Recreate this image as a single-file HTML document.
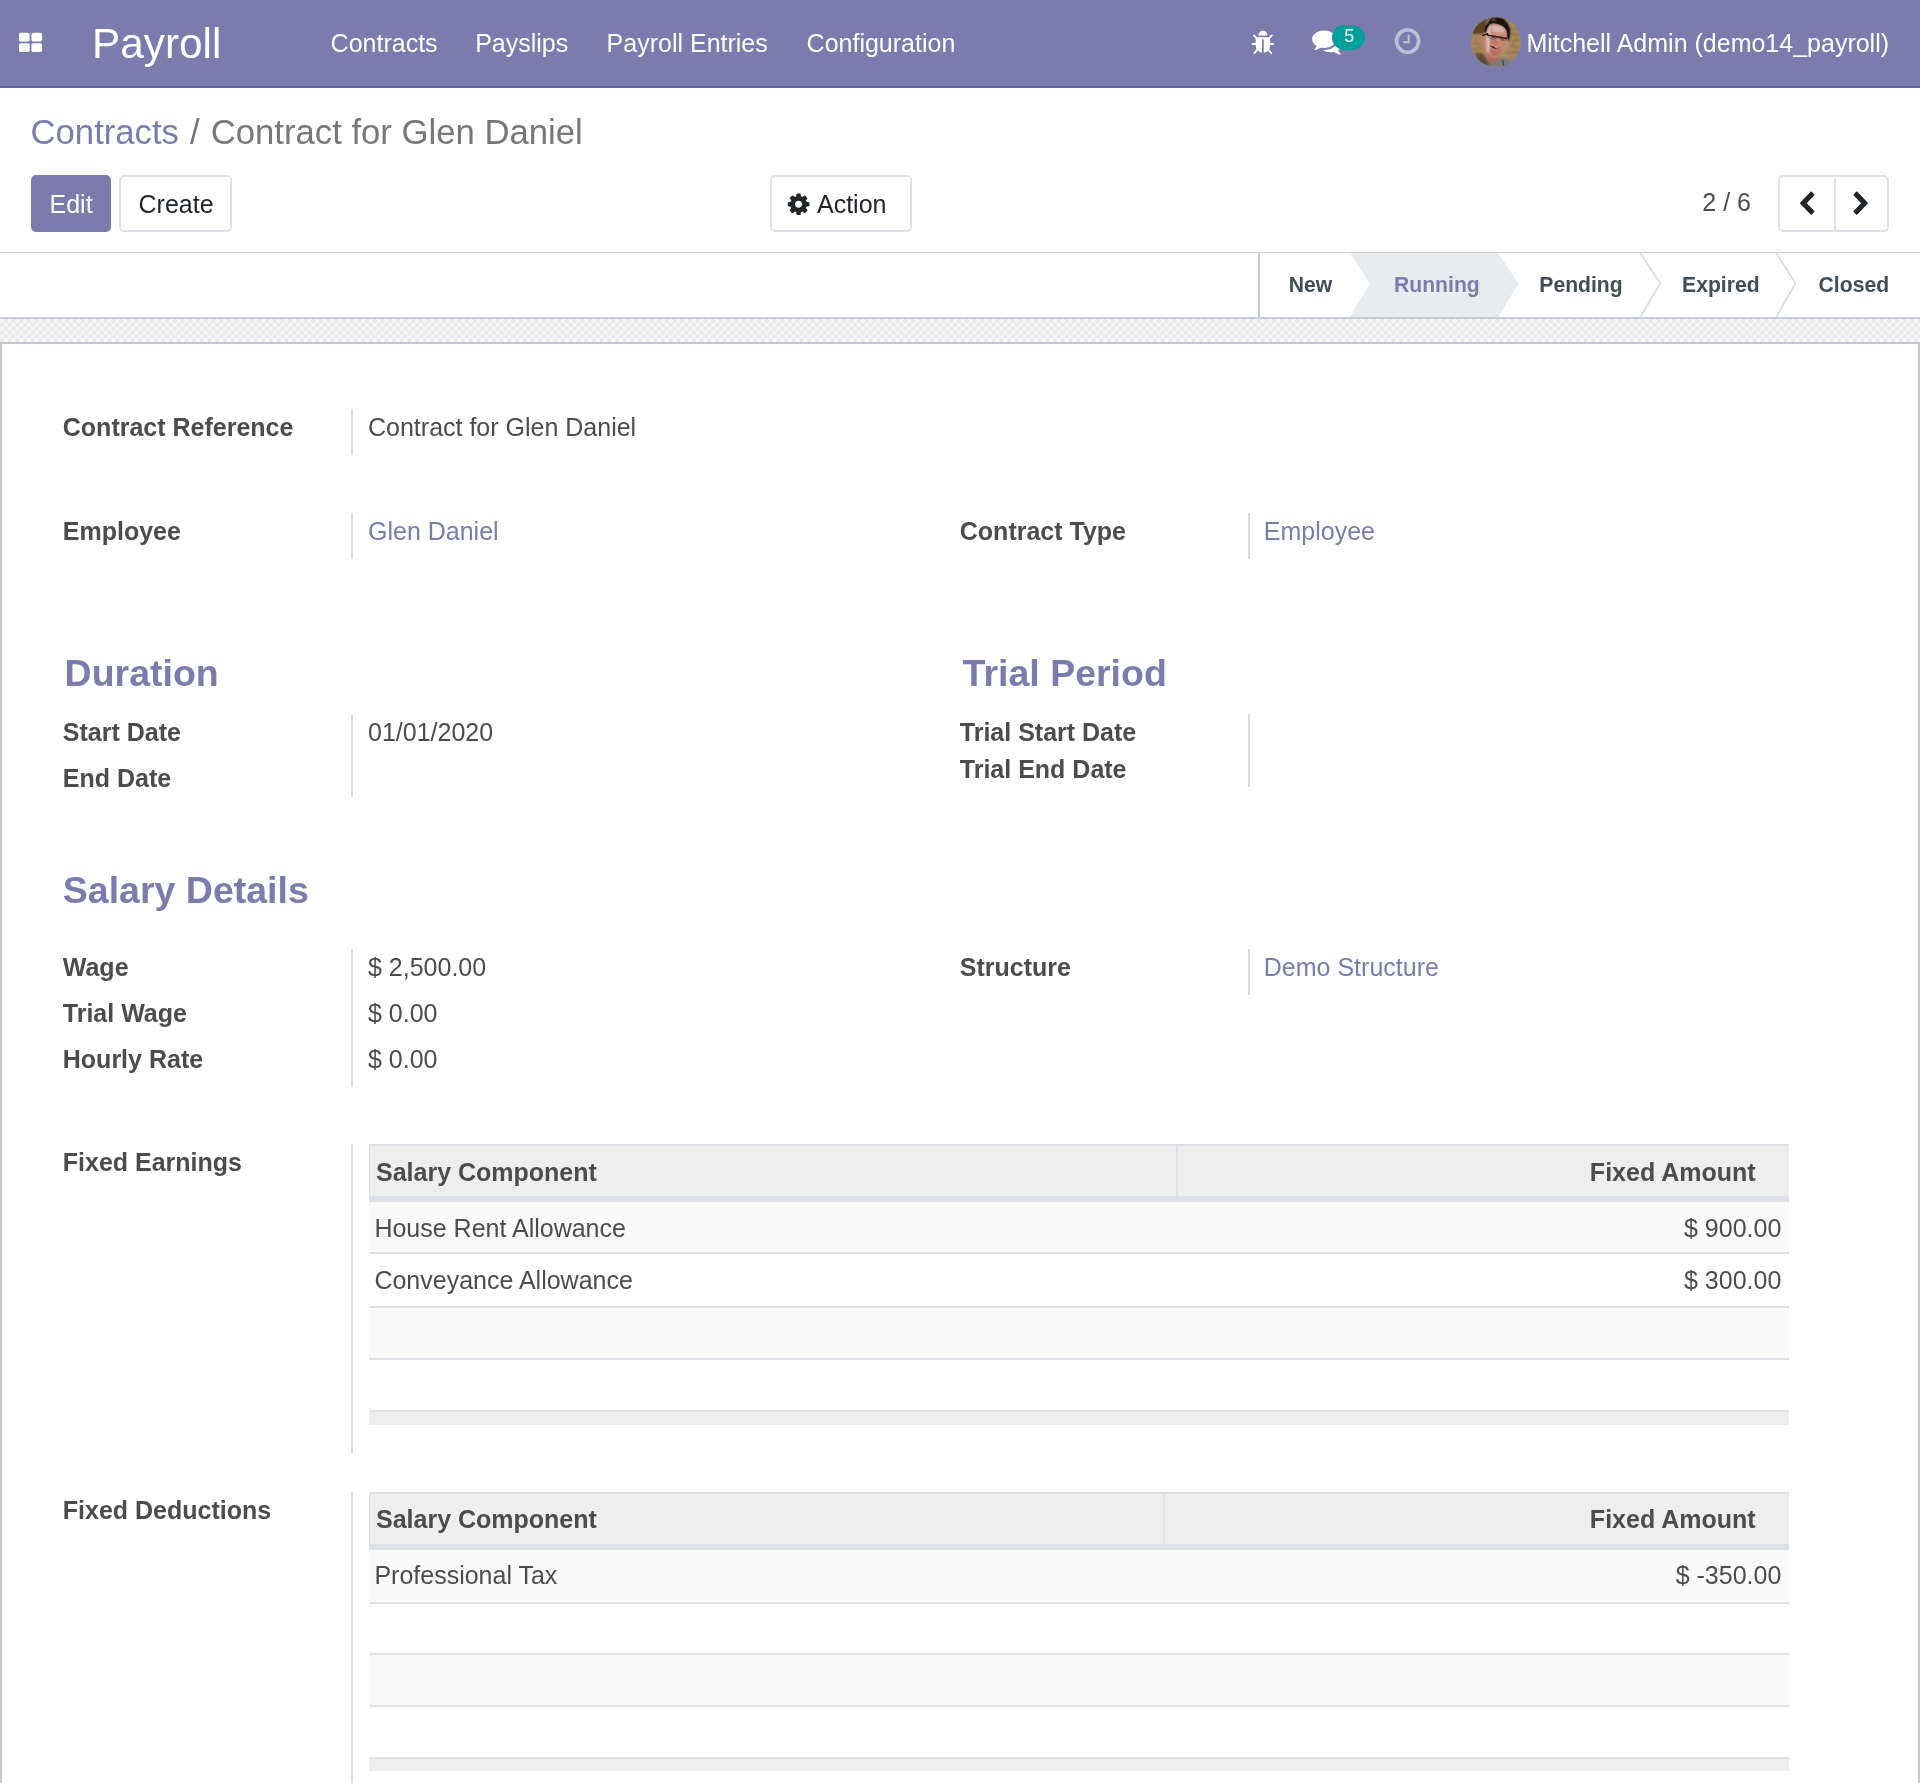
<!DOCTYPE html>
<html lang="en">
<head>
<meta charset="utf-8">
<title>Contract for Glen Daniel - Odoo</title>
<style>
*{box-sizing:border-box;margin:0;padding:0}
html,body{width:1920px;height:1783px;overflow:hidden;background:#fff}
body{font-family:"Liberation Sans",Arial,sans-serif;font-size:25px;color:#4c4c4c;position:relative}
.t{position:absolute;white-space:nowrap;line-height:0;display:block;height:0}
#root{position:absolute;left:0;top:0;width:1920px;height:1783px;overflow:hidden;will-change:transform}
.box{position:absolute}
#nav{left:0;top:0;width:1920px;height:88px;background:#7c7bad;border-bottom:2px solid #5f5e97}
#cp{left:0;top:88px;width:1920px;height:165px;background:#fff;border-bottom:1.6px solid #cfcfcf}
.btn{position:absolute;top:175px;height:57px;border-radius:5px;border:2px solid #dee2e6;background:#fff}
.btn.pri{background:#7c7bad;border-color:#7c7bad}
#sb{left:0;top:253px;width:1920px;height:66px;background:#fff;border-bottom:2px solid #c8ccd5}
#bg{left:0;top:319px;width:1920px;height:1464px;background-color:#f6f6f6;
background-image:linear-gradient(45deg,#e7e7e7 25%,transparent 25%,transparent 75%,#e7e7e7 75%),linear-gradient(45deg,#e7e7e7 25%,transparent 25%,transparent 75%,#e7e7e7 75%);background-size:7.7px 7.7px;background-position:0 0,3.85px 3.85px}
#sheet{left:0;top:342.4px;width:1920px;height:1445px;background:#fff;border:2px solid #c6c5d4}
.sep{position:absolute;width:1.75px;background:#dcdcdc}
.tbl{position:absolute;left:369px;width:1420px}
.tbl div{position:absolute;left:0;width:1420px}
</style>
</head>
<body>
<div id="root">

<div id="nav" class="box"></div>
<span class="t" style="left:92px;top:43.50px;font-size:42.3px;font-weight:400;color:#fff;">Payroll</span>
<span class="t" style="left:330.6px;top:43.00px;font-size:25px;font-weight:400;color:#fff;">Contracts</span>
<span class="t" style="left:475.2px;top:43.00px;font-size:25px;font-weight:400;color:#fff;">Payslips</span>
<span class="t" style="left:606.6px;top:43.00px;font-size:25px;font-weight:400;color:#fff;">Payroll Entries</span>
<span class="t" style="left:806.6px;top:43.00px;font-size:25px;font-weight:400;color:#fff;">Configuration</span>
<span class="t" style="left:1526.4px;top:43.00px;font-size:25px;font-weight:400;color:#fff;">Mitchell Admin (demo14_payroll)</span>
<svg class="box" style="left:0;top:0" width="1920" height="88" viewBox="0 0 1920 88"><path transform="translate(19.000 52.000) scale(0.01388 -0.01367)" fill="#fff" d="M768 512v-384q0 -52 -38 -90t-90 -38h-512q-52 0 -90 38t-38 90v384q0 52 38 90t90 38h512q52 0 90 -38t38 -90zM768 1280v-384q0 -52 -38 -90t-90 -38h-512q-52 0 -90 38t-38 90v384q0 52 38 90t90 38h512q52 0 90 -38t38 -90zM1664 512v-384q0 -52 -38 -90t-90 -38 h-512q-52 0 -90 38t-38 90v384q0 52 38 90t90 38h512q52 0 90 -38t38 -90zM1664 1280v-384q0 -52 -38 -90t-90 -38h-512q-52 0 -90 38t-38 90v384q0 52 38 90t90 38h512q52 0 90 -38t38 -90z"/><path transform="translate(1251.253 52.573) scale(0.01397 -0.01486)" fill="#fff" d="M1632 576q0 -26 -19 -45t-45 -19h-224q0 -171 -67 -290l208 -209q19 -19 19 -45t-19 -45q-18 -19 -45 -19t-45 19l-198 197q-5 -5 -15 -13t-42 -28.5t-65 -36.5t-82 -29t-97 -13v896h-128v-896q-51 0 -101.5 13.5t-87 33t-66 39t-43.5 32.5l-15 14l-183 -207 q-20 -21 -48 -21q-24 0 -43 16q-19 18 -20.5 44.5t15.5 46.5l202 227q-58 114 -58 274h-224q-26 0 -45 19t-19 45t19 45t45 19h224v294l-173 173q-19 19 -19 45t19 45t45 19t45 -19l173 -173h844l173 173q19 19 45 19t45 -19t19 -45t-19 -45l-173 -173v-294h224q26 0 45 -19 t19 -45zM1152 1152h-640q0 133 93.5 226.5t226.5 93.5t226.5 -93.5t93.5 -226.5z"/><path transform="translate(1312.100 52.226) scale(0.01712 -0.01697)" fill="#fff" d="M1408 768q0 -139 -94 -257t-256.5 -186.5t-353.5 -68.5q-86 0 -176 16q-124 -88 -278 -128q-36 -9 -86 -16h-3q-11 0 -20.5 8t-11.5 21q-1 3 -1 6.5t0.5 6.5t2 6l2.5 5t3.5 5.5t4 5t4.5 5t4 4.5q5 6 23 25t26 29.5t22.5 29t25 38.5t20.5 44q-124 72 -195 177t-71 224 q0 139 94 257t256.5 186.5t353.5 68.5t353.5 -68.5t256.5 -186.5t94 -257zM1792 512q0 -120 -71 -224.5t-195 -176.5q10 -24 20.5 -44t25 -38.5t22.5 -29t26 -29.5t23 -25q1 -1 4 -4.5t4.5 -5t4 -5t3.5 -5.5l2.5 -5t2 -6t0.5 -6.5t-1 -6.5q-3 -14 -13 -22t-22 -7 q-50 7 -86 16q-154 40 -278 128q-90 -16 -176 -16q-271 0 -472 132q58 -4 88 -4q161 0 309 45t264 129q125 92 192 212t67 254q0 77 -23 152q129 -71 204 -178t75 -230z"/><path transform="translate(1394.700 52.017) scale(0.01680 -0.01706)" fill="#bebdd6" d="M896 992v-448q0 -14 -9 -23t-23 -9h-320q-14 0 -23 9t-9 23v64q0 14 9 23t23 9h224v352q0 14 9 23t23 9h64q14 0 23 -9t9 -23zM1312 640q0 148 -73 273t-198 198t-273 73t-273 -73t-198 -198t-73 -273t73 -273t198 -198t273 -73t273 73t198 198t73 273zM1536 640 q0 -209 -103 -385.5t-279.5 -279.5t-385.5 -103t-385.5 103t-279.5 279.5t-103 385.5t103 385.5t279.5 279.5t385.5 103t385.5 -103t279.5 -279.5t103 -385.5z"/></svg><div class="box" style="left:1332px;top:24.8px;width:33.2px;height:25.3px;border-radius:12.7px;background:#00a09d"></div><svg class="box" style="left:1471px;top:17px" width="50" height="50" viewBox="0 0 50 50"><defs><clipPath id="avc"><circle cx="25" cy="25" r="25"/></clipPath><filter id="avb" x="-20%" y="-20%" width="140%" height="140%"><feGaussianBlur stdDeviation="0.9"/></filter><filter id="avb2" x="-20%" y="-20%" width="140%" height="140%"><feGaussianBlur stdDeviation="0.35"/></filter></defs><g clip-path="url(#avc)"><rect width="50" height="50" fill="#a98b5e"/><g filter="url(#avb)"><path d="M0 0H17L14 9.600L12.500 17H0Z" fill="#5e3f20"/><path d="M17 0H34L30 3L20 3Z" fill="#7a5a32"/><g stroke="#896b43" stroke-width="1.100" fill="none"><path d="M0 20.500H11M0 26.500H10M0 32H12M0 37.500H10M38 11.500H50M39.500 17.500H50M39 23.500H50M37 29.500H50M35 35.500H50M41 41.500H50"/><path d="M5 20.500V26.500M8 26.500V32M4 32V37.500M43 11.500V17.500M46 17.500V23.500M42 23.500V29.500M45 29.500V35.500M40 35.500V41.500" stroke-width="0.800"/></g><path d="M4.700 35.700L11 36.100L14.500 40L19 48L12 50H6Z" fill="#5f4b3c"/><path d="M15 37L29 40L27.500 46L19 47Z" fill="#ab6b5c"/><path d="M18 46L27 44.500L30 40.500L36 41.500L42 43.500L38 50H19Z" fill="#747c7d"/><path d="M12.900 15L14.100 9.600L17.200 5.300L20 1.200L26.200 0.300L32.500 1.800L36.900 6.800L39.500 12.700L39.100 18.200L37.900 24L36.500 24.400L35.900 18.200L35.200 13.500L32 9.600L27.300 7.600L22.300 6.400L18.750 8L16.400 11.900L14.800 16.600Z" fill="#1d1511"/><path d="M16.400 11.900L18.750 8L22.300 6.400L27.300 7.600L32 9.600L35.200 13.500L35.900 18.200L36.500 24.400L35.500 28.300L33.200 33.800L30.100 38.100L26.600 40.400L22.700 40.800L18.750 39.300L15.600 36.100L13.300 30.300L12.500 24.400L12.900 18.600Z" fill="#c68a78"/><path d="M20 8L27 8L33 11L35 16L22 15Z" fill="#dcb3a8"/><path d="M17.600 9.500L19.600 8.800L18.400 22L18 35L16.200 34L16 22Z" fill="#e2ccd0"/><path d="M19 23L26 24L27.500 28L20 27.500Z" fill="#b87462"/><path d="M29 25L35 25.500L34 30L30 29Z" fill="#c07f6c"/><path d="M9.400 20.100L12.500 19.500L13 27.500L10.500 27Z" fill="#c07a66"/><path d="M36.300 25.500L38.200 26L37 30.500L35.500 30Z" fill="#cf937f"/><path d="M18 31L31 32L29 38.500L21 39Z" fill="#b5705e"/></g><g filter="url(#avb2)"><path d="M13.400 14.500L14.600 9.800L17.500 5.800L20.300 1.800L26.200 0.900L32.200 2.400L36.400 7.200L38.800 12.800L38.500 18L37.600 22.500L36.700 22L36.300 17L35.600 13L32.300 9L27.400 6.900L22.200 5.700L18.400 7.400L16 11.500L14.600 15.500Z" fill="#1d1511"/><path d="M11.300 18.600L16.400 16.800L16.800 18.200L27 20L35.900 21.500" stroke="#1f1816" stroke-width="1.500" fill="none"/><path d="M17 18.600C18 22.500 24 23.500 26.500 20.300M28.200 20.600C29 23.800 33.500 24.600 35.600 22" stroke="#6a4a40" stroke-width="0.700" fill="none"/><path d="M20.500 20.400L24.500 21M30 21.800L33.500 22.300" stroke="#4a3430" stroke-width="0.800"/><path d="M18.400 28.300C21 31.500 26 33 29.500 30.600C27 30.700 22 30 18.400 28.300Z" fill="#3a1e1a"/><path d="M23 29.900C25 31.500 27.500 31.700 28.800 30.700C26.500 30.800 24.800 30.500 23 29.900Z" fill="#f4e8e2"/><path d="M31.400 42.800L32.800 48.600" stroke="#3f4443" stroke-width="1.300"/><path d="M21 3.200L24 2.600L25 3.600" stroke="#8a8f96" stroke-width="0.700" fill="none"/></g></g></svg>
<span class="t" style="left:1344.3px;top:36.00px;font-size:17.9px;font-weight:400;color:#fff;">5</span>
<div id="cp" class="box"></div>
<span class="t" style="left:30.5px;top:132.00px;font-size:34.7px;font-weight:400;color:#7c7bad;">Contracts</span>
<span class="t" style="left:190px;top:132.00px;font-size:34.7px;font-weight:400;color:#6c757d;">/</span>
<span class="t" style="left:210.7px;top:132.00px;font-size:34.7px;font-weight:400;color:#777777;">Contract for Glen Daniel</span>
<div class="btn pri" style="left:31px;width:80px"></div>
<span class="t" style="left:49.5px;top:204.00px;font-size:25px;font-weight:400;color:#fff;">Edit</span>
<div class="btn" style="left:119.4px;width:112.6px"></div>
<span class="t" style="left:138.5px;top:204.00px;font-size:25px;font-weight:400;color:#212529;">Create</span>
<div class="btn" style="left:770.3px;width:141.6px"></div>
<svg class="box" style="left:780px;top:185px" width="40" height="40" viewBox="780 185 40 40"><path transform="translate(787.750 213.208) scale(0.01410 -0.01400)" fill="#212529" d="M1024 640q0 106 -75 181t-181 75t-181 -75t-75 -181t75 -181t181 -75t181 75t75 181zM1536 749v-222q0 -12 -8 -23t-20 -13l-185 -28q-19 -54 -39 -91q35 -50 107 -138q10 -12 10 -25t-9 -23q-27 -37 -99 -108t-94 -71q-12 0 -26 9l-138 108q-44 -23 -91 -38 q-16 -136 -29 -186q-7 -28 -36 -28h-222q-14 0 -24.5 8.5t-11.5 21.5l-28 184q-49 16 -90 37l-141 -107q-10 -9 -25 -9q-14 0 -25 11q-126 114 -165 168q-7 10 -7 23q0 12 8 23q15 21 51 66.5t54 70.5q-27 50 -41 99l-183 27q-13 2 -21 12.5t-8 23.5v222q0 12 8 23t19 13 l186 28q14 46 39 92q-40 57 -107 138q-10 12 -10 24q0 10 9 23q26 36 98.5 107.5t94.5 71.5q13 0 26 -10l138 -107q44 23 91 38q16 136 29 186q7 28 36 28h222q14 0 24.5 -8.5t11.5 -21.5l28 -184q49 -16 90 -37l142 107q9 9 24 9q13 0 25 -10q129 -119 165 -170q7 -8 7 -22 q0 -12 -8 -23q-15 -21 -51 -66.5t-54 -70.5q26 -50 41 -98l183 -28q13 -2 21 -12.5t8 -23.5z"/></svg>
<span class="t" style="left:817px;top:204.00px;font-size:25px;font-weight:400;color:#212529;">Action</span>
<span class="t" style="left:1702.3px;top:202.00px;font-size:25px;font-weight:400;color:#4c4c4c;">2 / 6</span>
<div class="btn" style="left:1778px;width:110.5px"></div>
<div class="box" style="left:1834px;top:175px;width:2px;height:57px;background:#dee2e6"></div>
<svg class="box" style="left:1790px;top:185px" width="90" height="36" viewBox="1790 185 90 36"><path transform="translate(1797.859 213.285) scale(0.01390 -0.01436)" fill="#212529" d="M1171 1235l-531 -531l531 -531q19 -19 19 -45t-19 -45l-166 -166q-19 -19 -45 -19t-45 19l-742 742q-19 19 -19 45t19 45l742 742q19 19 45 19t45 -19l166 -166q19 -19 19 -45t-19 -45z"/><path transform="translate(1852.249 213.285) scale(0.01390 -0.01436)" fill="#212529" d="M1107 659l-742 -742q-19 -19 -45 -19t-45 19l-166 166q-19 19 -19 45t19 45l531 531l-531 531q-19 19 -19 45t19 45l166 166q19 19 45 19t45 -19l742 -742q19 -19 19 -45t-19 -45z"/></svg>
<div id="sb" class="box"></div>
<div class="box" style="left:1258.3px;top:253px;width:1.8px;height:64.5px;background:#c8ccd5"></div>
<svg class="box" style="left:1340px;top:253px" width="480" height="64" viewBox="0 0 480 64"><path d="M10 0 L158.3 0 L178.3 30.5 L158.3 64 L10 64 L29.5 30.5 Z" fill="#e9ecef"/><g fill="none" stroke="#d5dae0" stroke-width="1.6"><path d="M300.3 0 L320.3 30.5 L300.3 64"/><path d="M436.3 0 L455.5 30.5 L436.3 64"/></g></svg>
<span class="t" style="left:1288.7px;top:284.50px;font-size:21.15px;font-weight:700;color:#454c57;">New</span>
<span class="t" style="left:1394px;top:284.50px;font-size:21.15px;font-weight:700;color:#7c7bad;">Running</span>
<span class="t" style="left:1539.3px;top:284.50px;font-size:21.15px;font-weight:700;color:#454c57;">Pending</span>
<span class="t" style="left:1682.1px;top:284.50px;font-size:21.15px;font-weight:700;color:#454c57;">Expired</span>
<span class="t" style="left:1818.6px;top:284.50px;font-size:21.15px;font-weight:700;color:#454c57;">Closed</span>
<div id="bg" class="box"></div>
<div id="sheet" class="box"></div>
<span class="t" style="left:62.8px;top:427.00px;font-size:25px;font-weight:700;color:#4c4c4c;">Contract Reference</span>
<span class="t" style="left:368px;top:427.00px;font-size:25px;font-weight:400;color:#4c4c4c;">Contract for Glen Daniel</span>
<div class="sep" style="left:351.25px;top:409px;height:45.5px"></div>
<span class="t" style="left:62.8px;top:531.00px;font-size:25px;font-weight:700;color:#4c4c4c;">Employee</span>
<span class="t" style="left:368px;top:531.00px;font-size:25px;font-weight:400;color:#7c7bad;">Glen Daniel</span>
<div class="sep" style="left:351.25px;top:513.25px;height:45.5px"></div>
<span class="t" style="left:959.8px;top:531.00px;font-size:25px;font-weight:700;color:#4c4c4c;">Contract Type</span>
<span class="t" style="left:1263.8px;top:531.00px;font-size:25px;font-weight:400;color:#7c7bad;">Employee</span>
<div class="sep" style="left:1248.25px;top:513.25px;height:45.5px"></div>
<span class="t" style="left:64.6px;top:673.00px;font-size:37.5px;font-weight:700;color:#7c7bad;">Duration</span>
<span class="t" style="left:962.6px;top:673.00px;font-size:37.5px;font-weight:700;color:#7c7bad;">Trial Period</span>
<span class="t" style="left:62.8px;top:732.00px;font-size:25px;font-weight:700;color:#4c4c4c;">Start Date</span>
<span class="t" style="left:368px;top:732.00px;font-size:25px;font-weight:400;color:#4c4c4c;">01/01/2020</span>
<span class="t" style="left:62.8px;top:778.00px;font-size:25px;font-weight:700;color:#4c4c4c;">End Date</span>
<div class="sep" style="left:351.25px;top:714.25px;height:82.5px"></div>
<span class="t" style="left:959.8px;top:732.00px;font-size:25px;font-weight:700;color:#4c4c4c;">Trial Start Date</span>
<span class="t" style="left:959.8px;top:769.00px;font-size:25px;font-weight:700;color:#4c4c4c;">Trial End Date</span>
<div class="sep" style="left:1248.25px;top:714.25px;height:72.5px"></div>
<span class="t" style="left:62.8px;top:890.00px;font-size:37.5px;font-weight:700;color:#7c7bad;">Salary Details</span>
<span class="t" style="left:62.8px;top:967.00px;font-size:25px;font-weight:700;color:#4c4c4c;">Wage</span>
<span class="t" style="left:368px;top:967.00px;font-size:25px;font-weight:400;color:#4c4c4c;">$&nbsp;2,500.00</span>
<span class="t" style="left:62.8px;top:1013.00px;font-size:25px;font-weight:700;color:#4c4c4c;">Trial Wage</span>
<span class="t" style="left:368px;top:1013.00px;font-size:25px;font-weight:400;color:#4c4c4c;">$&nbsp;0.00</span>
<span class="t" style="left:62.8px;top:1059.00px;font-size:25px;font-weight:700;color:#4c4c4c;">Hourly Rate</span>
<span class="t" style="left:368px;top:1059.00px;font-size:25px;font-weight:400;color:#4c4c4c;">$&nbsp;0.00</span>
<div class="sep" style="left:351.25px;top:949.25px;height:137.5px"></div>
<span class="t" style="left:959.8px;top:967.00px;font-size:25px;font-weight:700;color:#4c4c4c;">Structure</span>
<span class="t" style="left:1263.8px;top:967.00px;font-size:25px;font-weight:400;color:#7c7bad;">Demo Structure</span>
<div class="sep" style="left:1248.25px;top:949.25px;height:45.5px"></div>
<span class="t" style="left:62.8px;top:1162.00px;font-size:25px;font-weight:700;color:#4c4c4c;">Fixed Earnings</span>
<div class="sep" style="left:351.25px;top:1144px;height:309.5px"></div>
<div class="tbl" style="top:0;height:0">
<div style="top:1144.00px;height:52.10px;background:#eeeeee;border-top:2px solid #dee2e6;border-left:1.7px solid #dee2e6"></div>
<div style="top:1196.10px;height:5.70px;background:#dee2e6"></div>
<div style="left:807px;top:1146.00px;width:1.7px;height:50.10px;background:#dee2e6"></div>
<div style="top:1201.80px;height:50.10px;background:#fafafa"></div>
<div style="top:1308.00px;height:50.00px;background:#fafafa"></div>
<div style="top:1251.90px;height:1.9px;background:#dee2e6"></div>
<div style="top:1306.00px;height:1.9px;background:#dee2e6"></div>
<div style="top:1358.00px;height:1.9px;background:#dee2e6"></div>
<div style="top:1410.00px;height:14.90px;background:#eeeeee;border-top:2px solid #dee2e6"></div>
</div>
<span class="t" style="left:376px;top:1172.00px;font-size:25px;font-weight:700;color:#4c4c4c;">Salary Component</span>
<span class="t" style="right:164.4000000000001px;top:1172.00px;font-size:25px;font-weight:700;color:#4c4c4c;">Fixed Amount</span>
<span class="t" style="left:374.4px;top:1228.00px;font-size:25px;font-weight:400;color:#4c4c4c;">House Rent Allowance</span>
<span class="t" style="right:138.70000000000005px;top:1228.00px;font-size:25px;font-weight:400;color:#4c4c4c;">$&nbsp;900.00</span>
<span class="t" style="left:374.4px;top:1280.00px;font-size:25px;font-weight:400;color:#4c4c4c;">Conveyance Allowance</span>
<span class="t" style="right:138.70000000000005px;top:1280.00px;font-size:25px;font-weight:400;color:#4c4c4c;">$&nbsp;300.00</span>
<span class="t" style="left:62.8px;top:1510.00px;font-size:25px;font-weight:700;color:#4c4c4c;">Fixed Deductions</span>
<div class="sep" style="left:351.25px;top:1492px;height:291px"></div>
<div class="tbl" style="top:0;height:0">
<div style="top:1492.20px;height:51.70px;background:#eeeeee;border-top:2px solid #dee2e6;border-left:1.7px solid #dee2e6"></div>
<div style="top:1543.90px;height:5.90px;background:#dee2e6"></div>
<div style="left:794px;top:1494.20px;width:1.7px;height:49.70px;background:#dee2e6"></div>
<div style="top:1549.80px;height:51.90px;background:#fafafa"></div>
<div style="top:1655.20px;height:49.80px;background:#fafafa"></div>
<div style="top:1601.70px;height:1.9px;background:#dee2e6"></div>
<div style="top:1653.20px;height:1.9px;background:#dee2e6"></div>
<div style="top:1705.00px;height:1.9px;background:#dee2e6"></div>
<div style="top:1756.80px;height:14.70px;background:#eeeeee;border-top:2px solid #dee2e6"></div>
</div>
<span class="t" style="left:376px;top:1519.00px;font-size:25px;font-weight:700;color:#4c4c4c;">Salary Component</span>
<span class="t" style="right:164.4000000000001px;top:1519.00px;font-size:25px;font-weight:700;color:#4c4c4c;">Fixed Amount</span>
<span class="t" style="left:374.4px;top:1575.00px;font-size:25px;font-weight:400;color:#4c4c4c;">Professional Tax</span>
<span class="t" style="right:138.70000000000005px;top:1575.00px;font-size:25px;font-weight:400;color:#4c4c4c;">$&nbsp;-350.00</span>
</div>
</body>
</html>
